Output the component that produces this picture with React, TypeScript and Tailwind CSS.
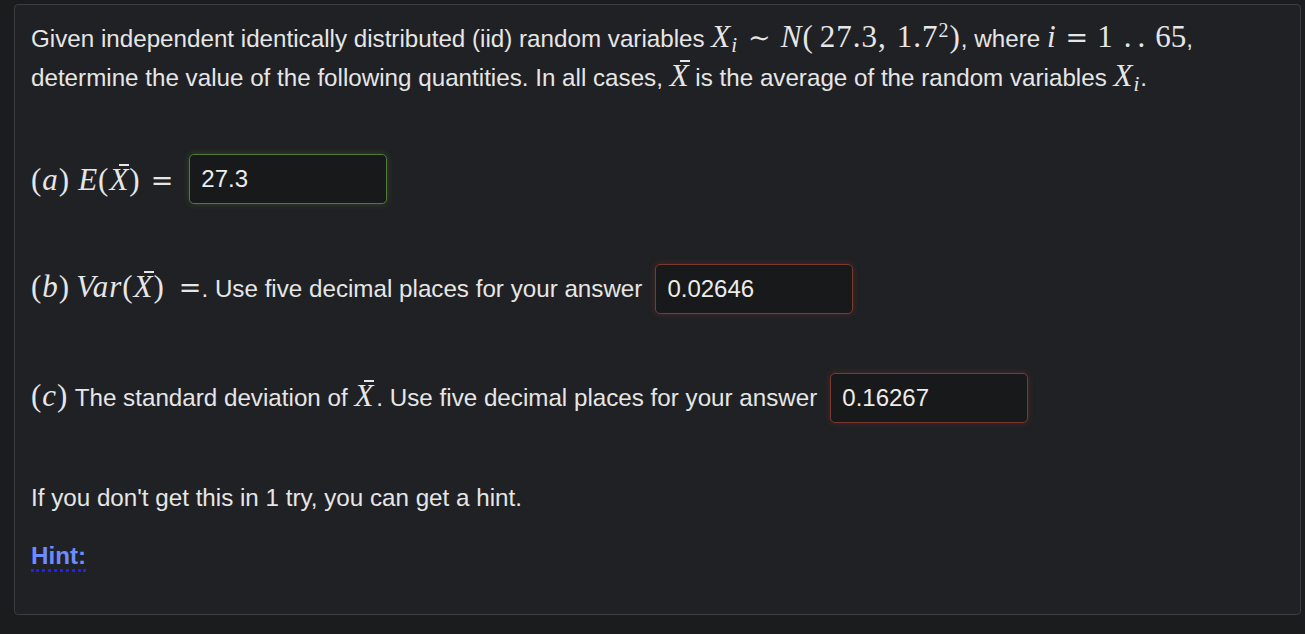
import React from "react";

const M = ({ children }: { children: React.ReactNode }) => (
  <span className="font-['Liberation_Serif',serif] text-[31px] leading-none tracking-[1px]">{children}</span>
);
const I = ({ children }: { children: React.ReactNode }) => <span className="italic">{children}</span>;
const Rel = ({ children, cls }: { children: React.ReactNode; cls: string }) => (
  <span className={"font-['DejaVu_Serif',serif] text-[27px] font-light tracking-normal " + cls}>{children}</span>
);

const XBar = () => (
  <span className="relative inline-block italic tracking-normal">
    X
    <span className="absolute left-[10px] top-[0px] h-[2px] w-[10px] bg-[#e6e6e6]" />
  </span>
);

const Input = ({ value, tone }: { value: string; tone: "green" | "red" }) => (
  <div
    className={
      "flex h-[50px] w-[198px] shrink-0 items-center rounded-[5px] border bg-[#18191b] pl-[11px] text-[24px] text-[#ececec] " +
      (tone === "green"
        ? "border-[#4f7a3c] shadow-[0_0_6px_rgba(90,140,60,0.35)]"
        : "border-[#7a3a30] shadow-[0_0_6px_rgba(150,60,50,0.35)]")
    }
  >
    {value}
  </div>
);

export default function App() {
  return (
    <div className="min-h-[634px] w-full bg-[#1b1c1e] pl-[14px] pr-[4px] pt-[4px] font-['Liberation_Sans',Arial,sans-serif] text-[24.2px] text-[#e6e6e6]">
      <div className="h-[611px] w-[1287px] rounded-[4px] border border-[#3c3d40] bg-[#202124] pl-[16px] pt-[14px]">
        <p className="whitespace-nowrap leading-[39px]">
          Given independent identically distributed (iid) random variables{" "}
          <M>
            <I>X</I>
            <sub className="text-[21px] italic">i</sub>
            <Rel cls="mx-[10px]">∼</Rel>
            <I>N</I>(<span className="ml-[6px]">27.3,</span>
            <span className="ml-[10px]">1.7</span>
            <sup className="text-[20px]">2</sup>)
          </M>
          , where{" "}
          <M>
            <I>i</I>
            <Rel cls="mx-[9px]">=</Rel>1<span className="ml-[10px]">.</span>
            <span className="ml-[5px]">.</span>
            <span className="ml-[9px] tracking-normal">65</span>
          </M>
          ,
          <br />
          determine the value of the following quantities. In all cases,{" "}
          <M>
            <XBar />
          </M>{" "}
          is the average of the random variables{" "}
          <M>
            <I>X</I>
            <sub className="text-[21px] italic">i</sub>
          </M>
          .
        </p>

        <div className="mt-[57px] flex items-center gap-[6px]">
          <M>
            (<I>a</I>)<span className="ml-[8px]" />
            <I>E</I>(<XBar />
            <span className="ml-[1px]">)</span>
            <Rel cls="mx-[10px]">=</Rel>
          </M>
          <Input value="27.3" tone="green" />
        </div>

        <div className="mt-[60px] flex items-center gap-[13px]">
          <span className="whitespace-nowrap">
            <M>
              (<I>b</I>)<span className="ml-[6px]" />
              <I>Var</I>(<XBar />
              <span className="ml-[1px]">)</span>
              <Rel cls="ml-[14px]">=</Rel>
            </M>
            . Use five decimal places for your answer
          </span>
          <Input value="0.02646" tone="red" />
        </div>

        <div className="mt-[59px] flex items-center gap-[13px]">
          <span className="whitespace-nowrap">
            <M>
              (<I>c</I>)
            </M>{" "}
            The standard deviation of{" "}
            <M>
              <XBar />
            </M>
            <span className="ml-[3px]">. Use five decimal places for your answer</span>
          </span>
          <Input value="0.16267" tone="red" />
        </div>

        <p className="mt-[60px] leading-[30px]">If you don't get this in 1 try, you can get a hint.</p>

        <p className="mt-[28px] leading-[30px]">
          <span className="cursor-pointer border-b-[3px] border-dotted border-[#2323e0] font-bold text-[#6e8cff]">
            Hint:
          </span>
        </p>
      </div>
    </div>
  );
}
